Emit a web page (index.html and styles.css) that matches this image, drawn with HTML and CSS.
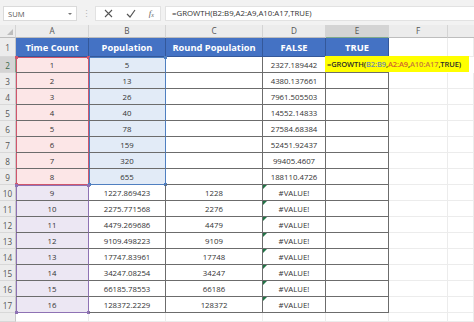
FILE: index.html
```html
<!DOCTYPE html>
<html>
<head>
<meta charset="utf-8">
<link rel="stylesheet" href="styles.css">
</head>
<body>
<div class="app">
  <div class="fbar">
    <div class="namebox"><span>SUM</span><span class="dd"></span></div>
    <div class="grip">⋮</div>
    <div class="btns">
      <svg width="9" height="9" viewBox="0 0 9 9"><path d="M1 1L8 8M8 1L1 8" stroke="#555" stroke-width="1.1" fill="none"/></svg>
      <svg width="10" height="9" viewBox="0 0 10 9"><path d="M1 5L4 8L9 1" stroke="#555" stroke-width="1.2" fill="none"/></svg>
      <span class="fx">f<sub>x</sub></span>
    </div>
    <div class="formula">=GROWTH(B2:B9,A2:A9,A10:A17,TRUE)</div>
  </div>

  <div class="grid">
    <div class="ch corner"><span class="tri"></span></div>
    <div class="ch">A</div><div class="ch">B</div><div class="ch">C</div><div class="ch">D</div><div class="ch sel">E</div><div class="ch">F</div><div class="ch last-col"></div>

    <div class="rh">1</div>
    <div class="c h">Time Count</div><div class="c h">Population</div><div class="c h">Round Population</div><div class="c h">FALSE</div><div class="c h">TRUE</div><div class="e"></div><div class="e"></div>

    <div class="rh sel">2</div>
    <div class="c ra top">1<i class="hd hd-tl red"></i><i class="hd hd-tr red"></i></div><div class="c rb top">5<i class="hd hd-tr blue"></i></div><div class="c"></div><div class="c">2327.189442</div>
    <div class="c active"><span class="hl"><span class="k">=GROWTH(</span><span class="fb">B2:B9</span><span class="k">,</span><span class="fr">A2:A9</span><span class="k">,</span><span class="fp">A10:A17</span><span class="k">,TRUE)</span></span></div><div class="e none"></div><div class="e none"></div>

    <div class="rh">3</div>
    <div class="c ra">2</div><div class="c rb">13</div><div class="c"></div><div class="c">4380.137661</div><div class="c"></div><div class="e"></div><div class="e"></div>
    <div class="rh">4</div>
    <div class="c ra">3</div><div class="c rb">26</div><div class="c"></div><div class="c">7961.505503</div><div class="c"></div><div class="e"></div><div class="e"></div>
    <div class="rh">5</div>
    <div class="c ra">4</div><div class="c rb">40</div><div class="c"></div><div class="c">14552.14833</div><div class="c"></div><div class="e"></div><div class="e"></div>
    <div class="rh">6</div>
    <div class="c ra">5</div><div class="c rb">78</div><div class="c"></div><div class="c">27584.68384</div><div class="c"></div><div class="e"></div><div class="e"></div>
    <div class="rh">7</div>
    <div class="c ra">6</div><div class="c rb">159</div><div class="c"></div><div class="c">52451.92437</div><div class="c"></div><div class="e"></div><div class="e"></div>
    <div class="rh">8</div>
    <div class="c ra">7</div><div class="c rb">320</div><div class="c"></div><div class="c">99405.4607</div><div class="c"></div><div class="e"></div><div class="e"></div>
    <div class="rh">9</div>
    <div class="c ra bot">8<i class="hd hd-bl red"></i></div><div class="c rb bot">655<i class="hd hd-bl blue"></i><i class="hd hd-br blue"></i></div><div class="c"></div><div class="c">188110.4726</div><div class="c"></div><div class="e"></div><div class="e"></div>

    <div class="rh">10</div>
    <div class="c rc top">9<i class="hd hd-tl purple"></i><i class="hd hd-tr purple"></i></div><div class="c">1227.869423</div><div class="c">1228</div><div class="c err">#VALUE!</div><div class="c"></div><div class="e"></div><div class="e"></div>
    <div class="rh">11</div>
    <div class="c rc">10</div><div class="c">2275.771568</div><div class="c">2276</div><div class="c err">#VALUE!</div><div class="c"></div><div class="e"></div><div class="e"></div>
    <div class="rh">12</div>
    <div class="c rc">11</div><div class="c">4479.269686</div><div class="c">4479</div><div class="c err">#VALUE!</div><div class="c"></div><div class="e"></div><div class="e"></div>
    <div class="rh">13</div>
    <div class="c rc">12</div><div class="c">9109.498223</div><div class="c">9109</div><div class="c err">#VALUE!</div><div class="c"></div><div class="e"></div><div class="e"></div>
    <div class="rh">14</div>
    <div class="c rc">13</div><div class="c">17747.83961</div><div class="c">17748</div><div class="c err">#VALUE!</div><div class="c"></div><div class="e"></div><div class="e"></div>
    <div class="rh">15</div>
    <div class="c rc">14</div><div class="c">34247.08254</div><div class="c">34247</div><div class="c err">#VALUE!</div><div class="c"></div><div class="e"></div><div class="e"></div>
    <div class="rh">16</div>
    <div class="c rc">15</div><div class="c">66185.78553</div><div class="c">66186</div><div class="c err">#VALUE!</div><div class="c"></div><div class="e"></div><div class="e"></div>
    <div class="rh">17</div>
    <div class="c rc bot">16<i class="hd hd-bl purple"></i><i class="hd hd-br purple"></i></div><div class="c">128372.2229</div><div class="c">128372</div><div class="c err">#VALUE!</div><div class="c"></div><div class="e"></div><div class="e"></div>

    <div class="rh"></div>
    <div class="e"></div><div class="e"></div><div class="e"></div><div class="e"></div><div class="e"></div><div class="e"></div><div class="e"></div>
  </div>
</div>
</body>
</html>
```

FILE: styles.css
```css
* { box-sizing: border-box; }
html, body { margin: 0; padding: 0; }
body {
  width: 474px;
  height: 322px;
  overflow: hidden;
  background: #ffffff;
  font-family: "Open Sans", "Liberation Sans", sans-serif;
  color: #333;
}

/* formula bar */
.fbar {
  height: 25px;
  background: #f2f2f2;
  display: flex;
  align-items: flex-start;
  padding-top: 6px;
}
.namebox {
  margin-left: 3px;
  width: 74px;
  height: 15px;
  background: #fff;
  border: 1px solid #dadada;
  display: flex;
  align-items: center;
  justify-content: space-between;
  padding: 0 4px 0 4px;
  font-size: 7.6px;
  color: #555;
}
.dd {
  width: 0; height: 0;
  border-left: 2px solid transparent;
  border-right: 2px solid transparent;
  border-top: 2.5px solid #777;
}
.grip {
  width: 18px;
  height: 15px;
  text-align: center;
  font-size: 9px;
  line-height: 15px;
  color: #b5b5b5;
}
.btns {
  width: 66px;
  height: 15px;
  background: #fff;
  border: 1px solid #e2e2e2;
  display: flex;
  align-items: center;
  justify-content: space-between;
  padding: 0 6px 0 8px;
}
.fx {
  font-family: "Liberation Serif", serif;
  font-style: italic;
  font-size: 9px;
  color: #666;
  line-height: 1;
}
.fx sub { font-size: 6px; vertical-align: -1px; }
.formula {
  flex: 1;
  margin-left: 4px;
  height: 15px;
  background: #fff;
  border: 1px solid #e2e2e2;
  border-right: none;
  padding-left: 6px;
  font-size: 7.8px;
  line-height: 13px;
  color: #333;
  white-space: nowrap;
}

/* grid */
.grid {
  display: grid;
  grid-template-columns: 16px 73px 77px 97px 63px 63px 59px 26px;
  grid-template-rows: 13px 19px repeat(16, 16px) 9px;
}
.ch {
  background: #ececec;
  border-right: 1px solid #d4d4d4;
  border-bottom: 1px solid #bdbdbd;
  font-size: 8.2px;
  color: #555;
  display: flex;
  align-items: center;
  justify-content: center;
  line-height: 1;
}
.ch.sel {
  background: #d4d4d4;
  border-bottom: 1px solid #7fa98b;
}
.ch.last-col { border-right: none; }
.corner { position: relative; }
.tri {
  position: absolute;
  right: 2px;
  bottom: 2px;
  width: 0; height: 0;
  border-left: 6px solid transparent;
  border-bottom: 6px solid #bcbcbc;
}
.rh {
  background: #ececec;
  border-right: 1px solid #c8c8c8;
  border-bottom: 1px solid #d8d8d8;
  font-size: 8.2px;
  color: #555;
  display: flex;
  align-items: center;
  justify-content: center;
  padding-top: 1px;
}
.rh.sel {
  background: #d4d4d4;
  border-right: 1px solid #7fa98b;
  color: #3a6b4c;
}

.c {
  position: relative;
  border-right: 1px solid #6c6c6c;
  border-bottom: 1px solid #6c6c6c;
  font-size: 7.8px;
  color: #333;
  display: flex;
  align-items: center;
  justify-content: center;
  white-space: nowrap;
}
.c.h {
  background: #4472c4;
  color: #fff;
  font-weight: 700;
  font-size: 9.3px;
  border-right-color: #34589a;
  border-bottom-color: #34589a;
}
.e {
  border-right: 1px solid #ececec;
  border-bottom: 1px solid #ececec;
}
.e.none { border-right: none; border-bottom: none; }

/* referenced ranges */
.ra { background: #fce6e7; border-right-color: #d0566c; box-shadow: inset 1px 0 0 #d0566c; }
.rb { background: #e2ebf7; border-right-color: #4f7fc0; box-shadow: inset 1px 0 0 #4f7fc0; }
.rc { background: #ece7f3; border-right-color: #8e72b4; box-shadow: inset 1px 0 0 #8e72b4; }
.ra.top { box-shadow: inset 1px 0 0 #d0566c, inset 0 1px 0 #d0566c; }
.rb.top { box-shadow: inset 1px 0 0 #4f7fc0, inset 0 1px 0 #4f7fc0; }
.rc.top { box-shadow: inset 1px 0 0 #8e72b4, inset 0 1px 0 #8e72b4; }
.ra.bot { border-bottom-color: #d0566c; }
.rb.bot { border-bottom-color: #4f7fc0; }
.rc.bot { border-bottom-color: #8e72b4; }

.hd {
  position: absolute;
  width: 3px;
  height: 3px;
}
.hd.red { background: #d0566c; }
.hd.blue { background: #4f7fc0; }
.hd.purple { background: #8e72b4; }
.hd-tl { left: -1px; top: -1px; }
.hd-tr { right: -2px; top: -1px; }
.hd-bl { left: -1px; bottom: -2px; }
.hd-br { right: -2px; bottom: -2px; }

/* error indicator */
.err::before {
  content: "";
  position: absolute;
  left: 0;
  top: 0;
  width: 0; height: 0;
  border-top: 4px solid #217346;
  border-right: 4px solid transparent;
}

/* active cell with formula */
.active {
  z-index: 2;
  justify-content: flex-start;
  overflow: visible;
}
.hl {
  display: flex;
  align-items: center;
  align-self: stretch;
  margin-left: -1px;
  margin-top: -1px;
  padding-left: 2px;
  width: 144px;
  min-width: 144px;
  background: #ffff00;
  font-size: 7.5px;
  font-weight: 600;
  letter-spacing: -0.1px;
}
.k { color: #2b2b2b; }
.fb { color: #6f8aa8; }
.fr { color: #d2622e; }
.fp { color: #c77a3a; }
```
